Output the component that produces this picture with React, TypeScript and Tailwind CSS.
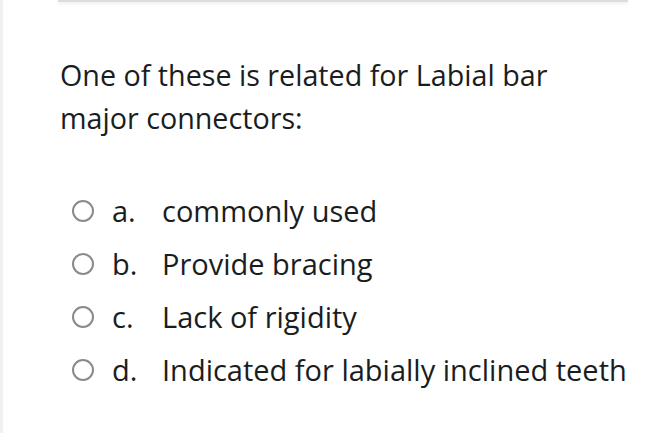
import React from "react";

const options = [
  { l: "a.", t: "commonly used" },
  { l: "b.", t: "Provide bracing" },
  { l: "c.", t: "Lack of rigidity" },
  { l: "d.", t: "Indicated for labially inclined teeth" },
];

export default function App() {
  return (
    <div
      className="relative w-[668px] h-[433px] bg-white overflow-hidden text-[#1a1d20]"
      style={{ fontFamily: '"Open Sans", "Noto Sans", sans-serif' }}
    >
      <div className="absolute left-0 top-0 h-full w-[3px] bg-[#f0f0f0]" />
      <div className="absolute left-[58px] top-0 w-[570px] h-[2px] bg-[#dcdcdc] shadow-[0_2px_3px_rgba(0,0,0,0.08)]" />
      <div className="pl-[60px] pt-[53px] pr-[20px]">
        <p className="text-[28.7px] leading-[43px] whitespace-nowrap">
          One of these is related for Labial bar
          <br />
          major connectors:
        </p>
        <div className="mt-[45px] flex flex-col pl-[12px]">
          {options.map((o) => (
            <div key={o.l} className="flex items-center h-[53px] whitespace-nowrap">
              <span className="w-[22px] h-[22px] rounded-full border-[2px] border-[#8a8a8a] shrink-0" />
              <span className="ml-[18px] w-[50px] text-[29px] leading-[40px]">{o.l}</span>
              <span className="text-[29px] leading-[40px]">{o.t}</span>
            </div>
          ))}
        </div>
      </div>
    </div>
  );
}
